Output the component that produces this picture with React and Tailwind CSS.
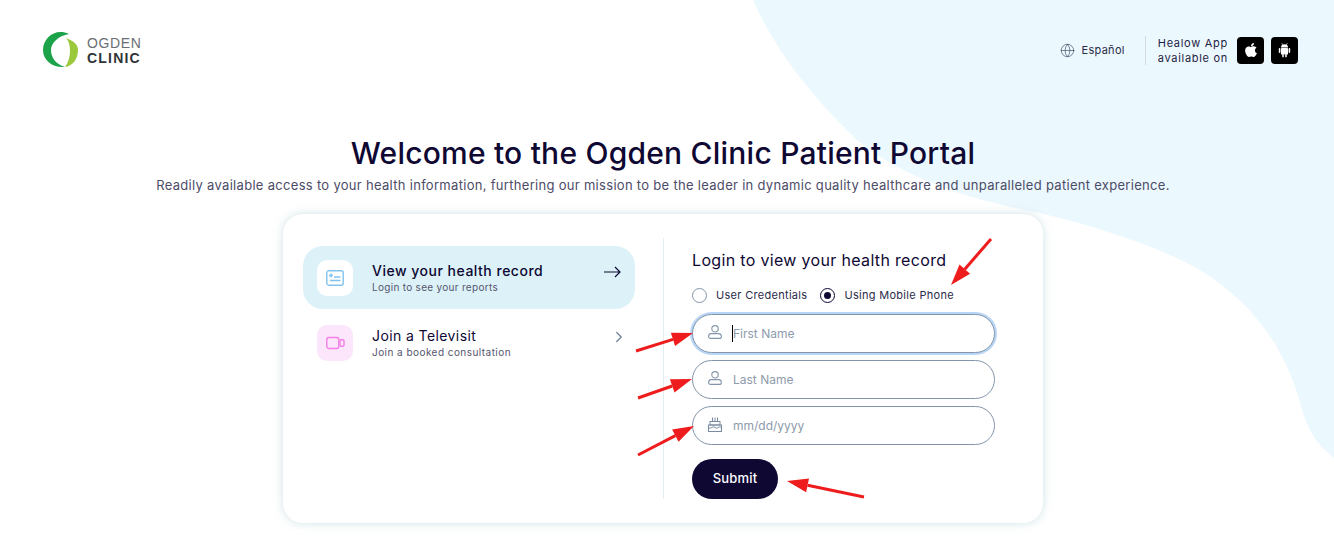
import React from 'react';
import { Globe, ChevronRight } from 'lucide-react';
import { FaApple } from 'react-icons/fa';

const Logo = () => (
  <svg width="35" height="36" viewBox="0 0 35 36" className="shrink-0">
    <path d="M26 2 C23 0.6 20.500 0 17.500 0 C8 0 0 8 0 18 C0 28 9 36 22 35 C13 32 8 26 8 18 C8 11 15 4 26 2Z" fill="#1ca34a" />
    <path d="M23 6 C31 9 35 13 35 18 C35 28 29 34 22 35 C25 31 27 25 27 19 C27 14 26 9 23 6Z" fill="#9cc83c" />
  </svg>
);

const UserIcon = () => (
  <svg width="14" height="14" viewBox="0 0 14 14" fill="none" stroke="#8496ab" strokeWidth="1.1" className="shrink-0">
    <circle cx="7" cy="3.8" r="3.200" />
    <path d="M3.500 8.600 H10.500 C12.200 8.600 13.400 10 13.400 11.400 C13.400 12.600 12.600 13.400 11.400 13.400 H2.600 C1.400 13.400 0.600 12.600 0.600 11.400 C0.600 10 1.800 8.600 3.500 8.600Z" />
  </svg>
);

const CakeIcon = () => (
  <svg width="14" height="15" viewBox="0 0 14 15" fill="none" stroke="#7a8a9e" strokeWidth="1" className="shrink-0">
    <path d="M4.500 0.500 V4.500 M7 0.500 V4.500 M9.500 0.500 V4.500" />
    <rect x="2" y="4.500" width="10" height="3.500" />
    <rect x="0.500" y="8" width="13" height="6.500" />
    <path d="M0.500 10.500 Q2 12 3.700 10.500 T7 10.500 T10.300 10.500 T13.500 10.500" />
  </svg>
);

const AndroidIcon = () => (
  <svg width="13" height="15" viewBox="0 0 13 15" fill="white">
    <path d="M3 4.500 C3 2.500 4.500 1.300 6.500 1.300 C8.500 1.300 10 2.500 10 4.500Z" />
    <path d="M3.800 0.300 L4.800 1.800 M9.200 0.300 L8.200 1.800" stroke="white" strokeWidth="0.8" />
    <rect x="3" y="5" width="7" height="6.500" rx="0.6" />
    <rect x="0.800" y="5" width="1.600" height="5" rx="0.8" />
    <rect x="10.600" y="5" width="1.600" height="5" rx="0.8" />
    <rect x="4.200" y="11" width="1.600" height="3.400" rx="0.8" />
    <rect x="7.200" y="11" width="1.600" height="3.400" rx="0.8" />
  </svg>
);

const RecordIcon = () => (
  <svg width="18" height="16" viewBox="0 0 18 16" fill="none" stroke="#82c3ee" strokeWidth="1.4">
    <rect x="0.800" y="0.800" width="16.400" height="14.400" rx="2" />
    <path d="M5 3.500 V7.500 M3 5.500 H7 M8 7 H14.500 M4 10.500 H14.500" />
  </svg>
);

const VideoIcon = () => (
  <svg width="19" height="14" viewBox="0 0 19 14" fill="none" stroke="#f47fe6" strokeWidth="1.4">
    <rect x="0.800" y="1.500" width="12" height="11" rx="2.200" />
    <rect x="14" y="3.800" width="4" height="6.400" rx="1.200" />
  </svg>
);

const Field = ({ icon, placeholder, focused, mb }) => (
  <div
    className={`flex items-center h-[39px] w-[303px] rounded-[20px] border border-[#8496ab] pl-[15px] bg-white ${mb} ${
      focused ? 'shadow-[0_0_0_2px_#b9d5f5]' : ''
    }`}
  >
    <span className="w-[16px] flex -mt-[3px]">{icon}</span>
    <span className={`ml-[8px] w-px h-[17px] ${focused ? 'bg-black' : 'bg-transparent'}`} />
    <input
      readOnly
      placeholder={placeholder}
      className="flex-1 bg-transparent outline-none text-[12px] placeholder:text-[#8e9bab]"
    />
  </div>
);

const Arrow = ({ x1, y1, x2, y2 }) => {
  const a = Math.atan2(y2 - y1, x2 - x1);
  const l = 21;
  const w = 7;
  const bx = x2 - l * Math.cos(a);
  const by = y2 - l * Math.sin(a);
  const px = -Math.sin(a) * w;
  const py = Math.cos(a) * w;
  return (
    <g>
      <line x1={x1} y1={y1} x2={bx} y2={by} stroke="#ee1c1c" strokeWidth="3" />
      <polygon points={`${x2},${y2} ${bx + px},${by + py} ${bx - px},${by - py}`} fill="#ee1c1c" />
    </g>
  );
};

export default function App() {
  return (
    <div className="relative w-[1334px] h-[560px] overflow-hidden bg-white font-['Inter',sans-serif] text-[#0e0833]">
      {/* background blob */}
      <svg className="absolute inset-0" width="1334" height="560" viewBox="0 0 1334 560">
        <path
          d="M753 0 C775 50 810 95 857 140 C900 175 960 198 1040 213 C1110 230 1165 250 1200 270 C1245 298 1285 340 1303 413 C1310 435 1320 447 1334 458 V0 Z"
          fill="#ebf8fe"
        />
      </svg>

      <div className="relative w-[1326px]">
        {/* Header */}
        <header className="flex items-center justify-between h-[100px] pl-[43px] pr-[28px]">
          <div className="flex items-center gap-[9px] font-['Liberation_Sans',sans-serif]">
            <Logo />
            <div className="leading-[15px] text-[14px] pt-[1px]">
              <div className="text-[#6b6f73] tracking-[0.6px]">OGDEN</div>
              <div className="font-bold text-[#2f3338] tracking-[1.2px]">CLINIC</div>
            </div>
          </div>
          <div className="flex items-center">
            <Globe size={15} strokeWidth={1} className="text-[#33415c]" />
            <span className="ml-[6px] text-[11px] tracking-[0.3px] text-[#2b2b4a]">Español</span>
            <div className="ml-[20px] mr-[12px] h-[29px] w-px bg-[#d4dadf]" />
            <div className="text-[11px] leading-[15px] tracking-[0.7px] text-[#1f2345] pt-[1px]">
              Healow App
              <br />
              available on
            </div>
            <a className="ml-[9px] w-[27px] h-[27px] rounded-[4px] bg-black text-white flex items-center justify-center">
              <FaApple size={16} />
            </a>
            <a className="ml-[7px] w-[27px] h-[27px] rounded-[4px] bg-black text-white flex items-center justify-center">
              <AndroidIcon />
            </a>
          </div>
        </header>

        {/* Title */}
        <h1 className="mt-[32px] text-center text-[30px] leading-[42px] tracking-[0.22px] font-[450]">
          Welcome to the Ogden Clinic Patient Portal
        </h1>
        <p className="text-center text-[13px] leading-[22px] tracking-[0.3px] text-[#4d4c68]">
          Readily available access to your health information, furthering our mission to be the leader in dynamic quality healthcare and unparalleled patient experience.
        </p>

        {/* Card */}
        <div className="mx-auto mt-[18px] w-[760px] h-[309px] rounded-[20px] bg-white shadow-[0_0_10px_rgba(170,200,210,0.55)] flex pl-[20px] pt-[24px]">
          <div className="w-[332px] pt-[8px]">
            <div className="h-[63px] rounded-[20px] bg-[#dcf2f8] flex items-center pl-[14px] pr-[14px]">
              <div className="w-[36px] h-[36px] rounded-[10px] bg-white flex items-center justify-center">
                <RecordIcon />
              </div>
              <div className="ml-[19px] flex-1">
                <div className="text-[14px] leading-[18px] tracking-[0.5px] font-[450]">View your health record</div>
                <div className="text-[10px] leading-[14px] tracking-[0.3px] text-[#55556e]">Login to see your reports</div>
              </div>
              <svg width="17" height="12" viewBox="0 0 17 12" fill="none" stroke="#0e0833" strokeWidth="1.200" className="mb-[12px]">
                <path d="M0 6 H16 M11 1 L16 6 L11 11" />
              </svg>
            </div>
            <div className="mt-[2px] h-[63px] flex items-center pl-[14px] pr-[7px]">
              <div className="w-[36px] h-[36px] rounded-[10px] bg-[#fbe6fb] flex items-center justify-center">
                <VideoIcon />
              </div>
              <div className="ml-[19px] flex-1">
                <div className="text-[14px] leading-[18px] tracking-[0.4px]">Join a Televisit</div>
                <div className="text-[10px] leading-[14px] tracking-[0.45px] text-[#55556e]">Join a booked consultation</div>
              </div>
              <ChevronRight size={18} strokeWidth={1.6} className="text-[#6d7f96] mb-[12px]" />
            </div>
          </div>

          <div className="ml-[28px] w-px h-[261px] bg-[#e4eef2]" />

          <div className="ml-[28px] pt-[11px]">
            <div className="text-[16px] leading-[22px] tracking-[0.33px]">Login to view your health record</div>
            <div className="mt-[14px] h-[20px] flex items-center text-[11px] tracking-[0.3px] text-[#2b2b4a]">
              <span className="w-[15px] h-[15px] rounded-full border border-[#8496ab]" />
              <span className="ml-[9px]">User Credentials</span>
              <span className="ml-[13px] w-[15px] h-[15px] rounded-full border border-[#0e0833] flex items-center justify-center">
                <span className="w-[7px] h-[7px] rounded-full bg-[#0e0833]" />
              </span>
              <span className="ml-[9px]">Using Mobile Phone</span>
            </div>
            <div className="mt-[9px]">
              <Field icon={<UserIcon />} placeholder="First Name" focused mb="mb-[7px]" />
              <Field icon={<UserIcon />} placeholder="Last Name" mb="mb-[7px]" />
              <Field icon={<CakeIcon />} placeholder="mm/dd/yyyy" mb="mb-[14px]" />
            </div>
            <button className="w-[86px] h-[40px] rounded-[20px] bg-[#0e0833] text-white text-[13px] tracking-[0.2px] font-medium">Submit</button>
          </div>
        </div>
      </div>

      {/* red annotation arrows */}
      <svg className="absolute inset-0 pointer-events-none" width="1334" height="560" viewBox="0 0 1334 560">
        <Arrow x1={991} y1={239} x2={951} y2={285} />
        <Arrow x1={636} y1={351} x2={693} y2={333} />
        <Arrow x1={638} y1={398} x2={692} y2={379} />
        <Arrow x1={638} y1={455} x2={694} y2={426} />
        <Arrow x1={864} y1={497} x2={787} y2={481} />
      </svg>
    </div>
  );
}
